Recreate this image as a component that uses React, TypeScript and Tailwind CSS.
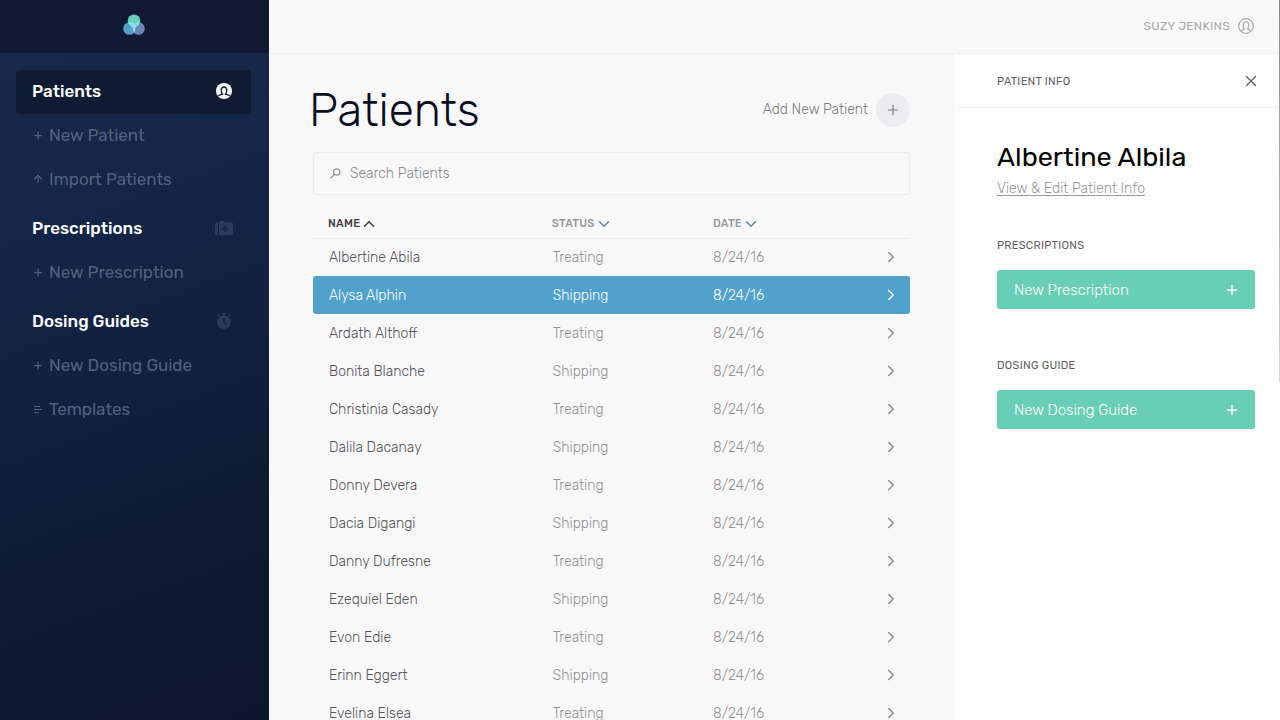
import { ReactNode } from 'react';
import { ArrowUp, ChevronDown, ChevronRight, ChevronUp, Plus, X } from 'lucide-react';

const patients = [
  { name: 'Albertine Abila', status: 'Treating', date: '8/24/16' },
  { name: 'Alysa Alphin', status: 'Shipping', date: '8/24/16' },
  { name: 'Ardath Althoff', status: 'Treating', date: '8/24/16' },
  { name: 'Bonita Blanche', status: 'Shipping', date: '8/24/16' },
  { name: 'Christinia Casady', status: 'Treating', date: '8/24/16' },
  { name: 'Dalila Dacanay', status: 'Shipping', date: '8/24/16' },
  { name: 'Donny Devera', status: 'Treating', date: '8/24/16' },
  { name: 'Dacia Digangi', status: 'Shipping', date: '8/24/16' },
  { name: 'Danny Dufresne', status: 'Treating', date: '8/24/16' },
  { name: 'Ezequiel Eden', status: 'Shipping', date: '8/24/16' },
  { name: 'Evon Edie', status: 'Treating', date: '8/24/16' },
  { name: 'Erinn Eggert', status: 'Shipping', date: '8/24/16' },
  { name: 'Evelina Elsea', status: 'Treating', date: '8/24/16' },
];

const selected = 'Alysa Alphin';

function Logo() {
  return (
    <svg width="22" height="22" viewBox="0 0 22 22" aria-hidden="true">
      <circle cx="6.5" cy="14.5" r="6.300" fill="#4f9fca" />
      <circle cx="15.5" cy="14.5" r="6.300" fill="#6d84b8" />
      <circle cx="11" cy="6.800" r="6.300" fill="#68ceb5" />
      <path d="M5.300 8.300Q8.500 7.600 11 9.800Q13.500 7.600 16.700 8.300Q15.500 12 12.600 13Q12.600 16.500 11 18.700Q9.400 16.500 9.400 13Q6.500 12 5.300 8.300z" fill="#86e3ee" />
    </svg>
  );
}

function UserSolidIcon() {
  return (
    <svg width="16" height="16" viewBox="0 0 16 16" aria-hidden="true">
      <circle cx="8" cy="8" r="8" fill="#fff" />
      <path d="M2.2 12.600c1.500-.6 2.800-1 4.300-1.500C5.500 10.200 5.200 8.800 5.200 7.300C5.200 5.300 6.200 4 8 4s2.800 1.300 2.800 3.300c0 1.500-.3 2.900-1.300 3.800c1.500.5 2.800.9 4.300 1.500" fill="none" stroke="#101b35" strokeWidth="1.300" />
    </svg>
  );
}

function UserOutlineIcon() {
  return (
    <svg width="16" height="16" viewBox="0 0 16 16" fill="none" stroke="#a9a9ab" strokeWidth="1.200" aria-hidden="true">
      <circle cx="8" cy="8" r="7.300" />
      <path d="M3 13c.8-1.100 2-1.600 3.600-2C5.600 10.100 5.200 8.800 5.200 7.300C5.200 5.100 6.300 3.800 8 3.800s2.800 1.300 2.800 3.500c0 1.500-.4 2.800-1.400 3.700c1.600.4 2.800.9 3.600 2" />
    </svg>
  );
}

function KitIcon() {
  return (
    <svg width="18" height="14" viewBox="0 0 18 14" fill="#2b3b5b" aria-hidden="true">
      <path d="M1.500 1.500H3V14H1.500A1.500 1.500 0 0 1 0 12.500V3a1.500 1.500 0 0 1 1.500-1.500z" />
      <path fillRule="evenodd" d="M4 0h5.500v1.500h7A1.500 1.500 0 0 1 18 3v9.500a1.500 1.500 0 0 1-1.500 1.500H4zM9.200 4.200v2.300H7v1.900h2.200v2.300h1.900V8.400h2.200V6.500h-2.200V4.200z" />
    </svg>
  );
}

function TimerIcon() {
  return (
    <svg width="16" height="16" viewBox="0 0 16 16" fill="#2b3b5b" aria-hidden="true">
      <path d="M5.500 0h5v1.500H9v1.300H7V1.500H5.500z" />
      <path d="M2 2l1.500 1.500M14 2l-1.500 1.500" stroke="#2b3b5b" strokeWidth="1.500" />
      <circle cx="8" cy="9.200" r="6.800" />
      <path d="M8 5.300v4.200l2.500 2.300" fill="none" stroke="#132444" strokeWidth="1.400" />
    </svg>
  );
}

function ListIcon() {
  return (
    <svg width="8" height="7" viewBox="0 0 8 7" stroke="currentColor" strokeWidth="1" aria-hidden="true">
      <path d="M0 .5h6M0 3.500h8M0 6.500h5" />
    </svg>
  );
}

function SearchIcon() {
  return (
    <svg width="11" height="11" viewBox="0 0 11 11" fill="none" stroke="#98989b" strokeWidth="1.300" aria-hidden="true">
      <circle cx="6.700" cy="4" r="3.200" />
      <path d="M4.400 6.400L.6 10.300" />
    </svg>
  );
}

function NavHeading({ label, icon, active }: { label: string; icon: ReactNode; active?: boolean }) {
  return (
    <a
      href="#"
      className={`flex h-11 items-center justify-between rounded px-4 pb-0.5 text-[17px] font-medium text-white ${active ? 'bg-[#0f1b33]' : ''}`}
    >
      <span className="pt-0.5">{label}</span>
      <span className="flex w-[22px] justify-center">{icon}</span>
    </a>
  );
}

function NavItem({ label, icon }: { label: string; icon: ReactNode }) {
  return (
    <a href="#" className="flex h-11 items-center gap-[5px] px-4 pb-0.5 text-[17px] text-[#52617f]">
      <span className="flex w-3 shrink-0 justify-center">{icon}</span>
      <span className="pt-0.5">{label}</span>
    </a>
  );
}

function ActionButton({ label }: { label: string }) {
  return (
    <button className="flex h-[39px] w-full items-center justify-between rounded-[3px] bg-[#68ceb5] pr-[15px] pl-[17px] text-[15px] font-light text-white">
      <span className="pt-0.5">{label}</span>
      <Plus size={16} strokeWidth={2} />
    </button>
  );
}

function Sidebar() {
  return (
    <aside className="flex w-[269px] shrink-0 flex-col bg-[linear-gradient(160deg,#182848_7%,#142648_28%,#10203c_55%,#0d1931_75%,#0c162f_100%)]">
      <div className="flex h-[53px] shrink-0 items-center justify-center bg-[#101931] pr-0.5 pb-1">
        <Logo />
      </div>
      <nav className="flex flex-col gap-[5px] pt-[17px] pr-[18px] pl-4">
        <div>
          <NavHeading label="Patients" icon={<UserSolidIcon />} active />
          <NavItem label="New Patient" icon={<Plus size={13} strokeWidth={2.5} />} />
          <NavItem label="Import Patients" icon={<ArrowUp size={12} strokeWidth={2.5} />} />
        </div>
        <div>
          <NavHeading label="Prescriptions" icon={<KitIcon />} />
          <NavItem label="New Prescription" icon={<Plus size={13} strokeWidth={2.5} />} />
        </div>
        <div>
          <NavHeading label="Dosing Guides" icon={<TimerIcon />} />
          <NavItem label="New Dosing Guide" icon={<Plus size={13} strokeWidth={2.5} />} />
          <NavItem label="Templates" icon={<ListIcon />} />
        </div>
      </nav>
    </aside>
  );
}

function PatientTable() {
  return (
    <table className="w-full table-fixed border-collapse text-left text-sm font-light">
      <thead>
        <tr className="h-[31px] border-b border-[#e8eeee] text-[11px] tracking-wide text-[#97989a]">
          <th className="w-[40%] pt-[3px] pl-[15px] font-medium">
            <button className="flex items-center text-[#3f4044]">
              NAME <ChevronUp size={18} />
            </button>
          </th>
          <th className="w-[27%] pt-[3px] font-medium">
            <button className="flex items-center">
              STATUS <ChevronDown size={18} className="text-[#64898f]" />
            </button>
          </th>
          <th className="pt-[3px] font-medium">
            <button className="flex items-center">
              DATE <ChevronDown size={18} className="text-[#64898f]" />
            </button>
          </th>
          <th className="w-9" aria-label="Open" />
        </tr>
      </thead>
      <tbody>
        {patients.map((p) => {
          const on = p.name === selected;
          return (
            <tr key={p.name} className={`h-[38px] ${on ? 'text-white' : 'text-[#939396]'}`}>
              <td className={`rounded-l-[3px] pt-0.5 pl-4 ${on ? 'bg-[#50a1cc]' : 'text-[#545458]'}`}>{p.name}</td>
              <td className={`pt-0.5 pl-px ${on ? 'bg-[#50a1cc]' : ''}`}>{p.status}</td>
              <td className={`pt-0.5 ${on ? 'bg-[#50a1cc]' : ''}`}>{p.date}</td>
              <td className={`rounded-r-[3px] pr-2.5 ${on ? 'bg-[#50a1cc]' : 'text-[#8c8c90]'}`}>
                <ChevronRight size={18} className="ml-auto" />
              </td>
            </tr>
          );
        })}
      </tbody>
    </table>
  );
}

function PatientInfo() {
  return (
    <aside className="w-[327px] shrink-0 border-l border-[#eeeef3] bg-white">
      <div className="flex h-[54px] items-center justify-between border-b border-[#f1f1f3] pr-5 pl-[43px] text-[#5f5f63]">
        <h2 className="pt-1 text-[11px] tracking-wide">PATIENT INFO</h2>
        <button aria-label="Close">
          <X size={18} strokeWidth={1.75} />
        </button>
      </div>
      <div className="pt-[31px] pr-[25px] pl-[43px]">
        <h3 className="text-[27px] leading-9 text-black">Albertine Albila</h3>
        <a href="#" className="text-sm leading-7 font-light text-[#98989b] underline underline-offset-2">
          View &amp; Edit Patient Info
        </a>
        <section className="mt-[35px]">
          <h4 className="mb-4 text-[11px] leading-4 tracking-wide text-[#5f5f63]">PRESCRIPTIONS</h4>
          <ActionButton label="New Prescription" />
        </section>
        <section className="mt-[49px]">
          <h4 className="mb-4 text-[11px] leading-4 tracking-wide text-[#5f5f63]">DOSING GUIDE</h4>
          <ActionButton label="New Dosing Guide" />
        </section>
      </div>
    </aside>
  );
}

export default function App() {
  return (
    <div className="relative flex h-screen overflow-hidden bg-[#f8f8f8] font-['Rubik','Roboto',sans-serif]">
      <Sidebar />
      <div className="flex min-w-0 flex-1 flex-col">
        <header className="flex h-[54px] shrink-0 items-center justify-end gap-2 border-b border-[#f1f1f4] pr-[26px] pb-0.5 text-xs text-[#a9a9ab]">
          <span className="tracking-wide">SUZY JENKINS</span>
          <UserOutlineIcon />
        </header>
        <div className="flex min-h-0 flex-1">
          <main className="min-w-0 flex-1 overflow-y-auto pr-[43px] pl-10 [scrollbar-width:none]">
            <div className="flex h-[98px] items-center justify-between pt-3.5">
              <h1 className="text-[46px] font-light text-[#0a0d24]">Patients</h1>
              <button className="flex items-center gap-2 text-sm font-light text-[#7c7c80]">
                Add New Patient
                <span className="flex size-[34px] items-center justify-center rounded-full bg-[#ecedf0]">
                  <Plus size={16} strokeWidth={1.75} />
                </span>
              </button>
            </div>
            <div className="pl-1">
              <label className="mb-3 flex h-[43px] items-center gap-[9px] rounded-[3px] border border-[#e8eeee] px-4">
                <SearchIcon />
                <input
                  type="text"
                  placeholder="Search Patients"
                  aria-label="Search Patients"
                  className="flex-1 bg-transparent text-sm font-light outline-none placeholder:text-[#8c8c90]"
                />
              </label>
              <PatientTable />
            </div>
          </main>
          <PatientInfo />
        </div>
      </div>
      {/* slim scroll indicator on the window edge */}
      <div className="absolute top-0 right-0 h-[53%] w-px bg-gradient-to-b from-[#8a8a8a] to-[#d8d8d8]" />
    </div>
  );
}
